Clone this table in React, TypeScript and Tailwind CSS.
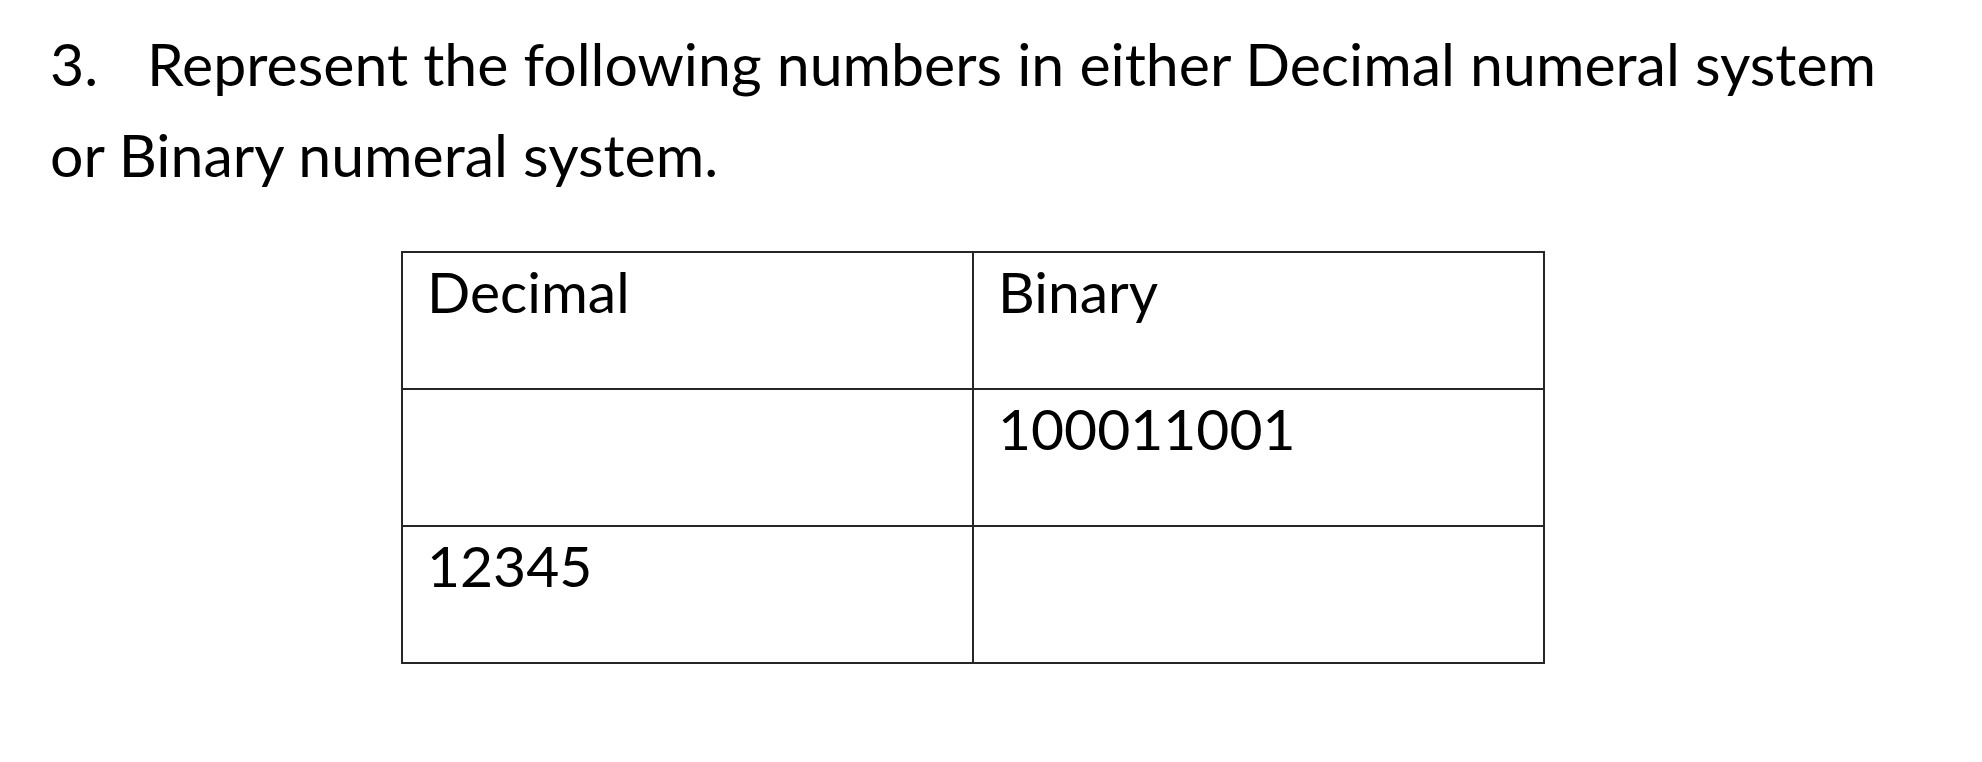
const rows: [string, string][] = [
  ['Decimal', 'Binary'],
  ['', '100011001'],
  ['12345', ''],
]

export default function App() {
  return (
    <div className="min-h-[762px] w-full bg-white text-black font-['Lato',sans-serif]">
      <div className="pl-[50px] pt-[18px] text-[59px] leading-[91px]">
        <span className="inline-block w-[97px]">3.</span>
        Represent the following numbers in either Decimal numeral system
        <br />
        or Binary numeral system.
      </div>

      <table className="ml-[401px] mt-[51px] border-collapse">
        <tbody>
          {rows.map((row, i) => (
            <tr key={i} className="h-[137px]">
              {row.map((cell, j) => (
                <td
                  key={j}
                  className="w-[571px] border-2 border-[#262626] pl-[24px] pt-[2px] align-top text-[57px] leading-[72px]"
                >
                  {cell}
                </td>
              ))}
            </tr>
          ))}
        </tbody>
      </table>
    </div>
  )
}
